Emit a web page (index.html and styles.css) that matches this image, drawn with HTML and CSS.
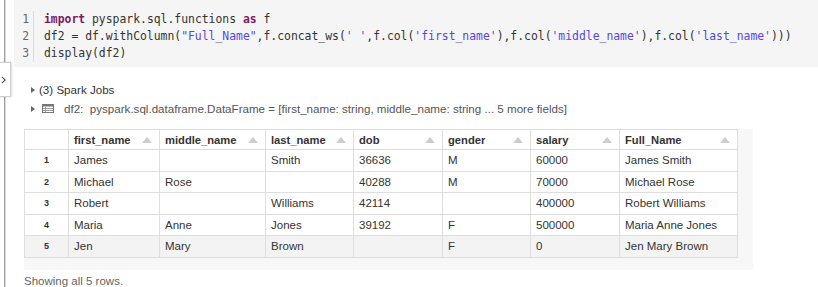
FILE: index.html
```html
<!DOCTYPE html>
<html lang="en">
  <head>
    <meta charset="UTF-8" />
    <meta name="viewport" content="width=device-width, initial-scale=1.0" />
    <title>Notebook cell</title>
    <link rel="stylesheet" href="styles.css">
  </head>
  <body>
    <div class="cell">
      <div class="cell-rail">
        <div class="rail-line"></div>
        <button class="collapse-tab" aria-label="Expand">
          <svg width="5" height="8" viewBox="0 0 5 8">
            <path d="M0.8 0.8 L4.2 4 L0.8 7.2" fill="none" stroke="#555" stroke-width="1.1" />
          </svg>
        </button>
      </div>

      <div class="cell-body">
        <div class="code">
          <div class="gutter">
            <div>1</div>
            <div>2</div>
            <div>3</div>
          </div>
          <div class="source">
            <div class="line"><span class="kw">import</span> pyspark.sql.functions <span class="kw">as</span> f</div>
            <div class="line">df2 = df.withColumn(<span class="str">"Full_Name"</span>,f.concat_ws(<span class="str">' '</span>,f.col(<span class="str">'first_name'</span>),f.col(<span class="str">'middle_name'</span>),f.col(<span class="str">'last_name'</span>)))</div>
            <div class="line">display(df2)</div>
          </div>
        </div>

        <div class="output">
          <div class="expander">
            <span class="caret"></span>
            <span>(3) Spark Jobs</span>
          </div>
          <div class="expander schema">
            <span class="caret"></span>
            <svg class="table-icon" width="12" height="9" viewBox="0 0 12 9">
              <rect x="0.5" y="0.5" width="11" height="8" fill="#fff" stroke="#777" />
              <rect x="0.5" y="0.5" width="11" height="2" fill="#777" />
              <line x1="1" y1="4.5" x2="11" y2="4.5" stroke="#999" />
              <line x1="1" y1="6.5" x2="11" y2="6.5" stroke="#999" />
              <line x1="3.5" y1="3" x2="3.5" y2="8" stroke="#999" />
            </svg>
            <span>df2:&nbsp; pyspark.sql.dataframe.DataFrame = [first_name: string, middle_name: string ... 5 more fields]</span>
          </div>

          <div class="result">
            <table class="grid">
              <colgroup>
                <col style="width: 44px" />
                <col style="width: 91px" />
                <col style="width: 106px" />
                <col style="width: 88px" />
                <col style="width: 89px" />
                <col style="width: 88px" />
                <col style="width: 89px" />
                <col style="width: 118px" />
              </colgroup>
              <thead>
                <tr>
                  <th class="index"></th>
                  <th><span class="sortable">first_name</span></th>
                  <th><span class="sortable">middle_name</span></th>
                  <th><span class="sortable">last_name</span></th>
                  <th><span class="sortable">dob</span></th>
                  <th><span class="sortable">gender</span></th>
                  <th><span class="sortable">salary</span></th>
                  <th><span class="sortable">Full_Name</span></th>
                </tr>
              </thead>
              <tbody>
                <tr>
                  <td class="index">1</td>
                  <td>James</td>
                  <td></td>
                  <td>Smith</td>
                  <td>36636</td>
                  <td>M</td>
                  <td>60000</td>
                  <td>James Smith</td>
                </tr>
                <tr>
                  <td class="index">2</td>
                  <td>Michael</td>
                  <td>Rose</td>
                  <td></td>
                  <td>40288</td>
                  <td>M</td>
                  <td>70000</td>
                  <td>Michael Rose</td>
                </tr>
                <tr>
                  <td class="index">3</td>
                  <td>Robert</td>
                  <td></td>
                  <td>Williams</td>
                  <td>42114</td>
                  <td></td>
                  <td>400000</td>
                  <td>Robert Williams</td>
                </tr>
                <tr>
                  <td class="index">4</td>
                  <td>Maria</td>
                  <td>Anne</td>
                  <td>Jones</td>
                  <td>39192</td>
                  <td>F</td>
                  <td>500000</td>
                  <td>Maria Anne Jones</td>
                </tr>
                <tr class="hover">
                  <td class="index">5</td>
                  <td>Jen</td>
                  <td>Mary</td>
                  <td>Brown</td>
                  <td></td>
                  <td>F</td>
                  <td>0</td>
                  <td>Jen Mary Brown</td>
                </tr>
              </tbody>
            </table>
          </div>

          <div class="footer">Showing all 5 rows.</div>
        </div>
      </div>
    </div>
  </body>
</html>
```

FILE: styles.css
```css
html,
body {
  height: 100%;
}
body {
  margin: 0;
  overflow: hidden;
  font-family: "Liberation Sans", Arial, sans-serif;
  color: #333;
  background: #fff;
}
.cell {
  display: flex;
  height: 100%;
}
.cell-rail {
  position: relative;
  flex: 0 0 14px;
}
.rail-line {
  margin-left: 4px;
  width: 1px;
  height: 100%;
  background: #a3a3a3;
  border-right: 1px solid #d9d9d9;
}
.collapse-tab {
  position: absolute;
  top: 62px;
  left: -4px;
  width: 15px;
  height: 35px;
  padding: 0;
  display: flex;
  align-items: center;
  justify-content: center;
  background: #fff;
  border: 1px solid #cfcfcf;
  box-shadow: 1px 0 2px rgba(0, 0, 0, 0.15);
}
.cell-body {
  flex: 1;
  min-width: 0;
}
.code {
  display: flex;
  background: #f5f5f5;
  padding: 11px 0 5px;
  font-family: "DejaVu Sans Mono", Menlo, monospace;
  font-size: 11.4px;
  line-height: 17px;
}
.gutter {
  width: 15px;
  padding-right: 4px;
  border-right: 1px solid #dcdcdc;
  text-align: right;
  color: #666;
}
.source {
  padding-left: 10px;
  color: #333;
}
.line {
  white-space: pre;
}
.kw {
  color: #7d1a5f;
  font-weight: bold;
}
.str {
  color: #5548e6;
}
.output {
  padding: 13px 0 0 10px;
}
.expander {
  display: flex;
  align-items: center;
  gap: 4px;
  height: 19px;
  padding-left: 7px;
  font-size: 11.6px;
  color: #333;
}
.schema {
  color: #555;
}
.schema .table-icon {
  margin: 0 6px 0 3px;
}
.caret {
  width: 0;
  height: 0;
  border-top: 3px solid transparent;
  border-bottom: 3px solid transparent;
  border-left: 4px solid #666;
}
.result {
  width: 729px;
  margin-top: 11px;
  padding-bottom: 12px;
  background: #f7f7f7;
}
.grid {
  border-collapse: collapse;
  table-layout: fixed;
  width: 713px;
  background: #fff;
  font-size: 11.5px;
}
.grid th,
.grid td {
  border: 1px solid #dedede;
  padding: 0 5px;
  height: 19px;
  text-align: left;
  white-space: nowrap;
  overflow: hidden;
}
.grid td {
  height: 20.5px;
  color: #333;
}
.grid th {
  font-size: 11.2px;
  font-weight: bold;
  color: #333;
}
.sortable {
  display: flex;
  align-items: center;
  justify-content: space-between;
}
.sortable::after {
  content: "";
  margin-right: 2px;
  border-left: 5px solid transparent;
  border-right: 5px solid transparent;
  border-bottom: 6px solid #cdcdcd;
}
.grid .index {
  text-align: center;
  font-size: 9px;
  font-weight: bold;
}
.grid tr.hover td {
  background: #f3f3f3;
}
.footer {
  margin-top: 3px;
  font-size: 11.5px;
  line-height: 16px;
  color: #666;
}
```
